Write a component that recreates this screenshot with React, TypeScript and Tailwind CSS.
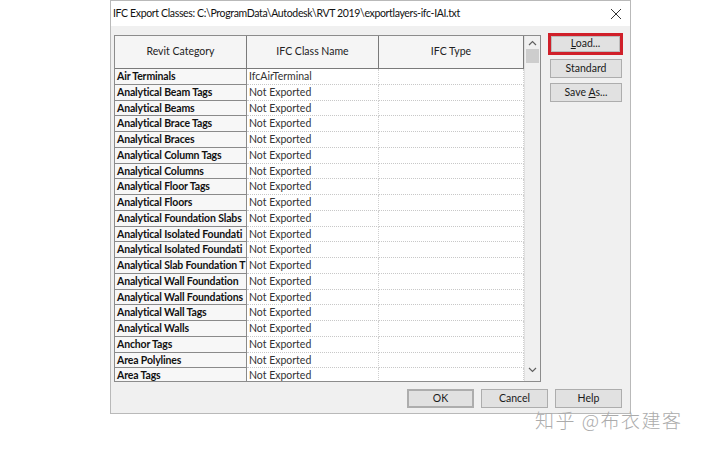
import React from "react";

const rows: [string, string][] = [
  ["Air Terminals", "IfcAirTerminal"],
  ["Analytical Beam Tags", "Not Exported"],
  ["Analytical Beams", "Not Exported"],
  ["Analytical Brace Tags", "Not Exported"],
  ["Analytical Braces", "Not Exported"],
  ["Analytical Column Tags", "Not Exported"],
  ["Analytical Columns", "Not Exported"],
  ["Analytical Floor Tags", "Not Exported"],
  ["Analytical Floors", "Not Exported"],
  ["Analytical Foundation Slabs", "Not Exported"],
  ["Analytical Isolated Foundati", "Not Exported"],
  ["Analytical Isolated Foundati", "Not Exported"],
  ["Analytical Slab Foundation T", "Not Exported"],
  ["Analytical Wall Foundation", "Not Exported"],
  ["Analytical Wall Foundations", "Not Exported"],
  ["Analytical Wall Tags", "Not Exported"],
  ["Analytical Walls", "Not Exported"],
  ["Anchor Tags", "Not Exported"],
  ["Area Polylines", "Not Exported"],
  ["Area Tags", "Not Exported"],
];

function Btn({ children, className = "" }: { children: React.ReactNode; className?: string }) {
  return (
    <div
      className={`flex items-center justify-center bg-[#e1e1e1] border border-[#adadad] text-[10.5px] text-[#1a1a1a] ${className}`}
    >
      {children}
    </div>
  );
}

export default function App() {
  return (
    <div
      className="relative w-[701px] h-[449px] bg-white overflow-hidden"
      style={{ fontFamily: 'Lato, "Open Sans", sans-serif' }}
    >
      <div className="ml-[110px] w-[521px] h-[414px] border border-[#b9b9b9] flex flex-col bg-[#f0f0f0]">
        {/* Title bar */}
        <div className="h-[25px] bg-white flex items-center justify-between pl-[2px] pr-[8px]">
          <span className="text-[10.5px] text-[#111] tracking-[-0.35px]">
            IFC Export Classes: C:\ProgramData\Autodesk\RVT 2019\exportlayers-ifc-IAI.txt
          </span>
          <svg width="12" height="12" viewBox="0 0 12 12" className="mt-[1px]">
            <path d="M1 1 L11 11 M11 1 L1 11" stroke="#333" strokeWidth="1" />
          </svg>
        </div>

        {/* Body */}
        <div className="flex pl-[3px] pt-[9px]">
          {/* Table */}
          <div className="w-[427px] h-[347px] border border-[#8c8c8c] bg-white flex overflow-hidden">
            <div className="w-[409px] flex flex-col">
              <div className="h-[33px] flex shrink-0 bg-[#f5f5f5] text-[10.5px] text-[#222]">
                <div className="w-[132px] border-r border-b border-[#7a7a7a] flex items-center justify-center">Revit Category</div>
                <div className="w-[132px] border-r border-b border-[#7a7a7a] flex items-center justify-center">IFC Class Name</div>
                <div className="flex-1 border-r border-b border-[#7a7a7a] flex items-center justify-center">IFC Type</div>
              </div>
              {rows.map(([cat, cls], i) => (
                <div key={i} className="h-[15.75px] flex shrink-0 text-[10.5px] leading-[15px]">
                  <div className="w-[132px] shrink-0 bg-[#f7f7f7] border-r border-b border-[#8a8a8a] pl-[2px] font-bold text-[#111] whitespace-nowrap overflow-hidden tracking-[-0.15px]">
                    {cat}
                  </div>
                  <div className="w-[132px] shrink-0 border-r border-b border-dotted border-r-[#cfcfcf] border-b-[#c8c8c8] pl-[2px] text-[#333] whitespace-nowrap overflow-hidden">
                    {cls}
                  </div>
                  <div className="flex-1 border-r border-b border-dotted border-r-[#cfcfcf] border-b-[#c8c8c8]" />
                </div>
              ))}
            </div>
            {/* Scrollbar */}
            <div className="flex-1 bg-[#f0f0f0] border-l border-[#e0e0e0] flex flex-col items-center">
              <svg width="9" height="6" viewBox="0 0 9 6" className="mt-[4px]">
                <path d="M1 5 L4.5 1.5 L8 5" stroke="#606060" strokeWidth="1.2" fill="none" />
              </svg>
              <div className="mt-[3px] w-[13px] h-[14px] bg-[#cdcdcd]" />
              <div className="flex-1" />
              <svg width="9" height="6" viewBox="0 0 9 6" className="mb-[8px]">
                <path d="M1 1 L4.5 4.5 L8 1" stroke="#606060" strokeWidth="1.2" fill="none" />
              </svg>
            </div>
          </div>

          {/* Side buttons */}
          <div className="flex flex-col ml-[7px] -mt-[2px]">
            <div className="w-[75px] h-[22px] border-[3px] border-[#d0202a] flex">
              <Btn className="flex-1 border-[#bcbcbc]">
                <span>
                  <u>L</u>oad...
                </span>
              </Btn>
            </div>
            <Btn className="ml-[2px] mt-[4px] w-[72px] h-[19px]">Standard</Btn>
            <Btn className="ml-[2px] mt-[5px] w-[72px] h-[19px]">
              <span>
                Save <u>A</u>s...
              </span>
            </Btn>
          </div>
        </div>

        {/* Bottom buttons */}
        <div className="flex justify-end gap-[7px] pr-[8px] mt-[7px]">
          <Btn className="w-[67px] h-[19px] border-[2px] border-[#3c78b4]">OK</Btn>
          <Btn className="w-[67px] h-[19px]">Cancel</Btn>
          <Btn className="w-[67px] h-[19px]">Help</Btn>
        </div>
      </div>

      {/* Watermark */}
      <div
        className="absolute left-[535px] top-[406px] text-[19px] font-light text-[#ababab] tracking-[1.5px]"
        style={{ fontFamily: '"Noto Sans CJK SC", sans-serif' }}
      >
        知乎 @布衣建客
      </div>
    </div>
  );
}
